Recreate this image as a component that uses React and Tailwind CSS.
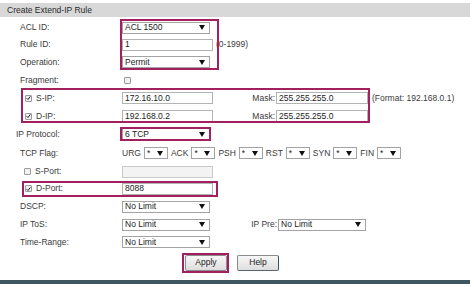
import React from "react";

// little black arrow used in every select
function Arrow() {
  return (
    <svg width="6" height="5" viewBox="0 0 6 5" className="shrink-0">
      <polygon points="0,0 6,0 3,5" fill="#111" />
    </svg>
  );
}

function Select({ value, w = "w-[88px]" }) {
  return (
    <div className={`${w} h-[12px] flex items-center justify-between border border-[#a3a3a3] bg-white pl-[2px] pr-[4px] text-[#222] leading-none`}>
      <span>{value}</span>
      <Arrow />
    </div>
  );
}

function Input({ value = "", disabled = false, w = "w-[91px]" }) {
  return (
    <div
      className={`${w} h-[12px] flex items-center border pl-[2px] leading-none text-[#222] ${
        disabled ? "border-[#c9c9c9] bg-[#f3f3f3]" : "border-[#b3b3b3] bg-white"
      }`}
    >
      {value}
    </div>
  );
}

function Check({ checked }) {
  return (
    <span className="w-[7px] h-[7px] shrink-0 flex items-center justify-center border border-[#9a9a9a] bg-[#f2f2f2] rounded-[1px]">
      {checked && (
        <svg width="6" height="6" viewBox="0 0 6 6">
          <path d="M0.8 3.2 L2.4 4.8 L5.3 1" stroke="#222" strokeWidth="1.2" fill="none" />
        </svg>
      )}
    </span>
  );
}

function Row({ h, label, pl = "pl-[20px]", children }) {
  return (
    <div className={`flex items-center ${h}`}>
      <div className={`w-[122px] shrink-0 ${pl}`}>{label}</div>
      {children}
    </div>
  );
}

function CheckLabel({ checked, text }) {
  return (
    <span className="flex items-center gap-[4px]">
      <Check checked={checked} />
      {text}
    </span>
  );
}

const FLAGS = ["URG", "ACK", "PSH", "RST", "SYN", "FIN"];

export default function App() {
  return (
    <div className="relative w-[474px] h-[287px] overflow-hidden bg-white font-['Liberation_Sans',Arial,sans-serif] text-[8.5px] text-[#3a3a3a]">
      {/* title bar */}
      <div className="mt-[3px] h-[14px] w-[470px] bg-[#d8d8d8] pl-[7px] leading-[14px] text-[#2a2a2a]">
        Create Extend-IP Rule
      </div>

      <div className="mt-[2px]">
        <Row h="h-[17px]" label="ACL ID:">
          <Select value="ACL 1500" />
        </Row>
        <Row h="h-[17px]" label="Rule ID:">
          <Input value="1" />
          <span className="ml-[3px]">(0-1999)</span>
        </Row>
        <Row h="h-[18px]" label="Operation:">
          <Select value="Permit" />
        </Row>
        <Row h="h-[18px]" label="Fragment:">
          <span className="ml-[2px]">
            <Check />
          </span>
        </Row>
        <Row h="h-[18px]" pl="pl-[25px]" label={<CheckLabel checked text="S-IP:" />}>
          <Input value="172.16.10.0" w="w-[91px]" />
          <span className="w-[63px] text-right pr-[1px]">Mask:</span>
          <Input value="255.255.255.0" w="w-[92px]" />
          <span className="ml-[4px]">(Format: 192.168.0.1)</span>
        </Row>
        <Row h="h-[18px]" pl="pl-[25px]" label={<CheckLabel checked text="D-IP:" />}>
          <Input value="192.168.0.2" w="w-[91px]" />
          <span className="w-[63px] text-right pr-[1px]">Mask:</span>
          <Input value="255.255.255.0" w="w-[92px]" />
        </Row>
        <Row h="h-[18px]" pl="pl-[16px]" label="IP Protocol:">
          <Select value="6 TCP" />
        </Row>
        <Row h="h-[20px]" label="TCP Flag:">
          <div className="flex items-center gap-[3px]">
            {FLAGS.map((f) => (
              <span key={f} className="flex items-center gap-[3px]">
                {f}
                <Select value="*" w="w-[24px]" />
              </span>
            ))}
          </div>
        </Row>
        <Row h="h-[17px]" pl="pl-[24px]" label={<CheckLabel text="S-Port:" />}>
          <Input disabled />
        </Row>
        <Row h="h-[17px]" pl="pl-[25px]" label={<CheckLabel checked text="D-Port:" />}>
          <Input value="8088" />
        </Row>
        <Row h="h-[19px]" label="DSCP:">
          <Select value="No Limit" />
        </Row>
        <Row h="h-[17px]" label="IP ToS:">
          <Select value="No Limit" />
          <span className="w-[68px] text-right pr-[1px]">IP Pre:</span>
          <Select value="No Limit" />
        </Row>
        <Row h="h-[18px]" label="Time-Range:">
          <Select value="No Limit" />
        </Row>

        {/* buttons */}
        <div className="flex items-center h-[23px] pl-[185px] gap-[10px]">
          <button className="w-[42px] h-[16px] rounded-[2px] border border-[#8c8c8c] bg-gradient-to-b from-[#f7f7f7] to-[#dedede] text-[#222] leading-none">
            Apply
          </button>
          <button className="w-[42px] h-[16px] rounded-[2px] border border-[#8c8c8c] border-r-[#3d4f63] border-b-[#5a6470] bg-gradient-to-b from-[#f7f7f7] to-[#dedede] text-[#222] leading-none">
            Help
          </button>
        </div>
      </div>

      {/* bottom bar */}
      <div className="mt-[6px] h-[4px] w-[470px] bg-[#3e5761]" />

      {/* magenta highlight marks drawn over the form */}
      <div className="absolute left-[120px] top-[19px] w-[99px] h-[51px] border-2 border-[#a3205f]" />
      <div className="absolute left-[21px] top-[88px] w-[349px] h-[35px] border-2 border-[#a3205f]" />
      <div className="absolute left-[120px] top-[127px] w-[91px] h-[14px] border-2 border-[#a3205f]" />
      <div className="absolute left-[22px] top-[181px] w-[196px] h-[16px] border-2 border-[#a3205f]" />
      <div className="absolute left-[182px] top-[253px] w-[47px] h-[20px] border-2 border-[#a3205f]" />
    </div>
  );
}
